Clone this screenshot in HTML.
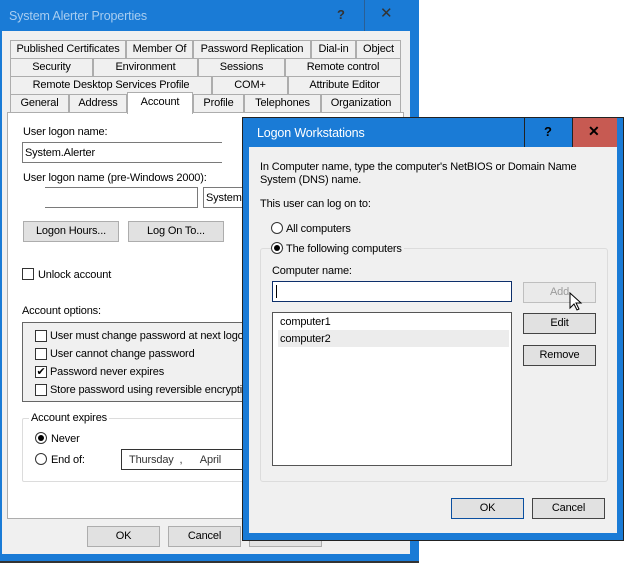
<!DOCTYPE html>
<html><head><style>
*{box-sizing:border-box;margin:0;padding:0}
body{width:633px;height:565px;background:#fff;position:relative;overflow:hidden;font-family:"Liberation Sans",sans-serif;font-size:11px;letter-spacing:-0.15px;color:#000}
.a{position:absolute}
.t{position:absolute;white-space:nowrap;line-height:14px}
.tab{position:absolute;background:#f0f0f0;border:1px solid #adadad;border-bottom:none;text-align:center;line-height:17px;height:18px;white-space:nowrap;overflow:hidden}
.btn{position:absolute;background:#e1e1e1;border:1px solid #adadad;text-align:center;line-height:18px;height:21px;white-space:nowrap}
.inp{position:absolute;background:#fff;border:1px solid #7a7a7a}
.cb{position:absolute;width:12px;height:12px;border:1px solid #333;background:#fff}
.rb{position:absolute;width:12px;height:12px;border:1px solid #333;border-radius:50%;background:#fff}
.rb.on::after{content:"";position:absolute;left:2px;top:2px;width:6px;height:6px;border-radius:50%;background:#000}
</style></head><body>
<div class="a" style="left:0;top:0;width:419px;height:563px;background:#1a7bd6;border-bottom:2px solid #333"></div>
<div class="t" style="left:9px;top:9px;color:#a8cdf0;font-size:12.5px">System Alerter Properties</div>
<div class="t" style="left:337px;top:8px;color:#333;font-weight:bold;font-size:13px">?</div>
<div class="a" style="left:364px;top:0;width:1px;height:31px;background:#2a5f95"></div>
<div class="t" style="left:380px;top:7px;color:#333;font-size:15px">✕</div>
<div class="a" style="left:2px;top:31px;width:408px;height:523px;background:#f0f0f0"></div>
<div class="tab" style="left:10px;top:40px;width:116px">Published Certificates</div>
<div class="tab" style="left:126px;top:40px;width:67px">Member Of</div>
<div class="tab" style="left:193px;top:40px;width:118px">Password Replication</div>
<div class="tab" style="left:311px;top:40px;width:45px">Dial-in</div>
<div class="tab" style="left:356px;top:40px;width:45px">Object</div>
<div class="tab" style="left:10px;top:58px;width:83px">Security</div>
<div class="tab" style="left:93px;top:58px;width:105px">Environment</div>
<div class="tab" style="left:198px;top:58px;width:87px">Sessions</div>
<div class="tab" style="left:285px;top:58px;width:116px">Remote control</div>
<div class="tab" style="left:10px;top:76px;width:202px">Remote Desktop Services Profile</div>
<div class="tab" style="left:212px;top:76px;width:76px">COM+</div>
<div class="tab" style="left:288px;top:76px;width:113px">Attribute Editor</div>
<div class="tab" style="left:10px;top:94px;width:59px">General</div>
<div class="tab" style="left:69px;top:94px;width:58px">Address</div>
<div class="tab" style="left:193px;top:94px;width:51px">Profile</div>
<div class="tab" style="left:244px;top:94px;width:77px">Telephones</div>
<div class="tab" style="left:321px;top:94px;width:80px">Organization</div>
<div class="a" style="left:7px;top:112px;width:397px;height:407px;background:#fff;border:1px solid #adadad"></div>
<div class="tab" style="left:127px;top:92px;width:66px;height:22px;background:#fff;line-height:18px">Account</div>
<div class="t" style="left:23px;top:125px">User logon name:</div>
<div class="inp" style="left:22px;top:142px;width:200px;height:21px;border-right:none"></div>
<div class="t" style="left:25px;top:146px">System.Alerter</div>
<div class="t" style="left:23px;top:171px">User logon name (pre-Windows 2000):</div>
<div class="inp" style="left:45px;top:187px;width:153px;height:21px;border-left:none"></div>
<div class="inp" style="left:203px;top:187px;width:45px;height:21px"></div>
<div class="t" style="left:206px;top:191px">System</div>
<div class="btn" style="left:23px;top:221px;width:96px">Logon Hours...</div>
<div class="btn" style="left:128px;top:221px;width:96px">Log On To...</div>
<div class="cb" style="left:22px;top:268px"></div>
<div class="t" style="left:38px;top:268px">Unlock account</div>
<div class="t" style="left:22px;top:304px">Account options:</div>
<div class="a" style="left:22px;top:322px;width:230px;height:80px;background:#f0f0f0;border:1px solid #666"></div>
<div class="cb" style="left:35px;top:330px"></div><div class="t" style="left:50px;top:329px">User must change password at next logon</div>
<div class="cb" style="left:35px;top:348px"></div><div class="t" style="left:50px;top:347px">User cannot change password</div>
<div class="cb" style="left:35px;top:366px;font-size:11px;line-height:10px;text-align:center">✔</div><div class="t" style="left:50px;top:365px">Password never expires</div>
<div class="cb" style="left:35px;top:384px"></div><div class="t" style="left:50px;top:383px">Store password using reversible encryption</div>
<div class="a" style="left:22px;top:418px;width:230px;height:64px;border:1px solid #dcdcdc;border-radius:2px"></div>
<div class="t" style="left:29px;top:411px;background:#fff;padding:0 2px">Account expires</div>
<div class="rb on" style="left:35px;top:432px"></div><div class="t" style="left:51px;top:432px">Never</div>
<div class="rb" style="left:35px;top:453px"></div><div class="t" style="left:51px;top:453px">End of:</div>
<div class="inp" style="left:121px;top:449px;width:130px;height:21px;border-color:#333"></div>
<div class="t" style="left:129px;top:453px;color:#333">Thursday&nbsp;&nbsp;,&nbsp;&nbsp;&nbsp;&nbsp;&nbsp;&nbsp;April</div>
<div class="btn" style="left:87px;top:526px;width:73px">OK</div>
<div class="btn" style="left:168px;top:526px;width:73px">Cancel</div>
<div class="btn" style="left:249px;top:526px;width:73px"></div>
<div class="a" style="left:242px;top:117px;width:382px;height:424px;background:#1a7bd6;border:1px solid #222"></div>
<div class="t" style="left:257px;top:126px;color:#fff;font-size:12.5px">Logon Workstations</div>
<div class="a" style="left:524px;top:118px;width:1px;height:29px;background:#222"></div>
<div class="t" style="left:544px;top:125px;font-weight:bold;font-size:13px">?</div>
<div class="a" style="left:572px;top:118px;width:45px;height:29px;background:#c75a52;border-left:1px solid #222"></div>
<div class="t" style="left:588px;top:124px;font-weight:bold;font-size:14px">✕</div>
<div class="a" style="left:249px;top:147px;width:368px;height:386px;background:#f0f0f0"></div>
<div class="t" style="left:260px;top:160px">In Computer name, type the computer's NetBIOS or Domain Name</div>
<div class="t" style="left:260px;top:173px">System (DNS) name.</div>
<div class="t" style="left:260px;top:197px">This user can log on to:</div>
<div class="rb" style="left:271px;top:222px"></div><div class="t" style="left:286px;top:222px">All computers</div>
<div class="a" style="left:260px;top:248px;width:348px;height:234px;border:1px solid #dcdcdc;border-radius:3px"></div>
<div class="rb on" style="left:271px;top:242px"></div><div class="t" style="left:284px;top:242px;background:#f0f0f0;padding:0 2px">The following computers</div>
<div class="t" style="left:272px;top:264px">Computer name:</div>
<div class="inp" style="left:272px;top:281px;width:240px;height:21px;border-color:#0d2f6b"></div>
<div class="a" style="left:276px;top:285px;width:1px;height:13px;background:#000"></div>
<div class="btn" style="left:523px;top:282px;width:73px;color:#9a9a9a;background:#eaeaea;border-color:#bfbfbf">Add</div>
<div class="inp" style="left:272px;top:312px;width:240px;height:154px;border-color:#555"></div>
<div class="a" style="left:278px;top:330px;width:231px;height:17px;background:#ececec"></div>
<div class="t" style="left:280px;top:315px">computer1</div>
<div class="t" style="left:280px;top:332px">computer2</div>
<div class="btn" style="left:523px;top:313px;width:73px;border-color:#444">Edit</div>
<div class="btn" style="left:523px;top:345px;width:73px;border-color:#444">Remove</div>
<div class="btn" style="left:451px;top:498px;width:73px;border-color:#0a4fa0">OK</div>
<div class="btn" style="left:532px;top:498px;width:73px;border-color:#444">Cancel</div>
<svg class="a" style="left:569px;top:292px" width="14" height="20" viewBox="0 0 14 20"><path d="M1 1 L1 16 L5 12 L8 18 L10 17 L7 11 L12 11 Z" fill="#fff" stroke="#000" stroke-width="1"/></svg>
</body></html>
